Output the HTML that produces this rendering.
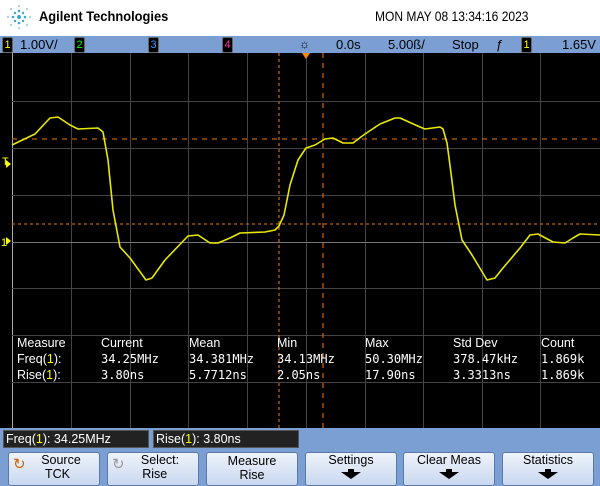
<!DOCTYPE html>
<html><head><style>
body{margin:0;width:600px;height:486px;overflow:hidden;background:#fff;font-family:"Liberation Sans",sans-serif;position:relative}
.a{position:absolute}
.bar{top:36px;left:0;width:600px;height:17px;background:#7b9fd3;font-size:13px;color:#000}
.bar span{position:absolute;top:1px}
.ch{position:absolute;top:1px;width:9px;height:14px;background:#000;border:1px solid #666;border-radius:2px;font-size:11px;text-align:center;line-height:14px}
.m{font-size:12.5px;color:#fff;line-height:16px}
.mono{font-family:"DejaVu Sans Mono","Liberation Mono",monospace;font-size:12px}
.y{color:#ff0}
.btn{position:absolute;top:452px;height:32px;width:90px;background:linear-gradient(#eef3fb,#c9d8ef);border:1px solid #5a78a8;border-radius:3px;font-size:12.5px;text-align:center;line-height:14px;color:#000}
.arr{display:block;margin:2px auto 0;width:6px;height:3px;background:#000;position:relative}
.arr:after{content:"";position:absolute;left:-7px;top:3px;border-left:10px solid transparent;border-right:10px solid transparent;border-top:7px solid #000}
</style></head><body>
<svg class="a" style="left:4px;top:2px" width="30" height="30" viewBox="0 0 30 30">
<g fill="#3aa6d6"><circle cx="15" cy="15" r="2"/><circle cx="15" cy="9" r="1.3"/><circle cx="15" cy="21" r="1.3"/><circle cx="9" cy="15" r="1.3"/><circle cx="21" cy="15" r="1.3"/><circle cx="11" cy="11" r="1.2"/><circle cx="19" cy="11" r="1.2"/><circle cx="11" cy="19" r="1.2"/><circle cx="19" cy="19" r="1.2"/><circle cx="15" cy="4" r=".8"/><circle cx="15" cy="26" r=".8"/><circle cx="4" cy="15" r=".8"/><circle cx="26" cy="15" r=".8"/><circle cx="7" cy="7" r=".8"/><circle cx="23" cy="7" r=".8"/><circle cx="7" cy="23" r=".8"/><circle cx="23" cy="23" r=".8"/></g></svg>
<div class="a" style="left:39px;top:8px;font-size:14px;font-weight:bold;transform:scaleX(.92);transform-origin:left">Agilent Technologies</div>
<div class="a" style="left:375px;top:8px;font-size:14px;transform:scaleX(.86);transform-origin:left">MON MAY 08 13:34:16 2023</div>
<div class="a bar">
<div class="ch" style="left:2px;color:#ff0">1</div><span style="left:20px">1.00V/</span>
<div class="ch" style="left:74px;color:#0f0">2</div>
<div class="ch" style="left:148px;color:#39f">3</div>
<div class="ch" style="left:222px;color:#f3a">4</div>
<span style="left:299px;font-size:12px">☼</span><span style="left:336px">0.0s</span><span style="left:388px">5.00ß/</span><span style="left:452px">Stop</span><span style="left:496px">ƒ</span>
<div class="ch" style="left:521px;color:#ff0">1</div><span style="left:562px">1.65V</span>
</div>
<svg class="a" style="left:0;top:53px" width="600" height="375">
<rect width="600" height="375" fill="#000"/>
<g stroke="#444" stroke-width="1">
<line x1="12.5" y1="0" x2="12.5" y2="375" stroke="#aaa"/>
<line x1="71.5" y1="0" x2="71.5" y2="375"/><line x1="130.5" y1="0" x2="130.5" y2="375"/><line x1="188.5" y1="0" x2="188.5" y2="375"/><line x1="247.5" y1="0" x2="247.5" y2="375"/><line x1="306.5" y1="0" x2="306.5" y2="375"/><line x1="365.5" y1="0" x2="365.5" y2="375"/><line x1="423.5" y1="0" x2="423.5" y2="375"/><line x1="482.5" y1="0" x2="482.5" y2="375"/><line x1="540.5" y1="0" x2="540.5" y2="375"/>
<line x1="12" y1="48.5" x2="600" y2="48.5"/><line x1="12" y1="95.5" x2="600" y2="95.5"/><line x1="12" y1="142.5" x2="600" y2="142.5"/><line x1="12" y1="189.5" x2="600" y2="189.5" stroke="#777"/><line x1="12" y1="235.5" x2="600" y2="235.5"/><line x1="12" y1="282.5" x2="600" y2="282.5"/><line x1="12" y1="329.5" x2="600" y2="329.5"/>
</g>
<g stroke="#c06010" stroke-width="1.3" stroke-dasharray="5,5">
<line x1="12" y1="86" x2="600" y2="86"/><line x1="323" y1="0" x2="323" y2="375"/>
</g>
<g stroke="#c06010" stroke-width="1.3" stroke-dasharray="3,3">
<line x1="12" y1="171" x2="600" y2="171"/><line x1="279" y1="0" x2="279" y2="375"/>
</g>
<polygon points="302,0 310,0 306,6" fill="#f80"/>
<polyline fill="none" stroke="#e8e800" stroke-width="1.6" stroke-linejoin="round" points="12,92 35,81 50,65 58,64 70,72 78,76 98,75 103,79 108,107 113,157 120,194 130,205 146,227 152,225 165,207 188,183 198,182 210,190 218,190 230,185 240,180 265,179 275,177 279,173 284,162 290,132 298,107 306,95 315,92 325,86 333,85 343,90 353,90 365,81 380,71 395,65 400,65 420,74 425,76 440,74 443,76 447,90 451,120 455,152 462,187 472,202 487,227 495,225 503,215 520,195 530,182 538,181 553,189 565,190 573,185 580,181 600,182"/>
<text x="2" y="112" fill="#ff0" font-size="11">T</text><polygon points="6,107 11,111 6,115" fill="#ff0"/>
<text x="1" y="193" fill="#ff0" font-size="11">1</text><polygon points="6,184 11,188 6,192" fill="#ff0"/>
</svg>
<div class="a m" style="left:17px;top:335px">Measure<br>Freq(<span class="y">1</span>):<br>Rise(<span class="y">1</span>):</div>
<div class="a m" style="left:101px;top:335px">Current<br><span class="mono">34.25MHz<br>3.80ns</span></div>
<div class="a m" style="left:189px;top:335px">Mean<br><span class="mono">34.381MHz<br>5.7712ns</span></div>
<div class="a m" style="left:277px;top:335px">Min<br><span class="mono">34.13MHz<br>2.05ns</span></div>
<div class="a m" style="left:365px;top:335px">Max<br><span class="mono">50.30MHz<br>17.90ns</span></div>
<div class="a m" style="left:453px;top:335px">Std Dev<br><span class="mono">378.47kHz<br>3.3313ns</span></div>
<div class="a m" style="left:541px;top:335px">Count<br><span class="mono">1.869k<br>1.869k</span></div>
<div class="a" style="left:0;top:428px;width:600px;height:58px;background:#7b9fd3"></div>
<div class="a" style="left:3px;top:430px;width:142px;height:16px;background:#222;border:1px solid #555;color:#fff;font-size:12.5px;line-height:16px;padding-left:2px">Freq(<span class="y">1</span>): 34.25MHz</div>
<div class="a" style="left:153px;top:430px;width:142px;height:16px;background:#222;border:1px solid #555;color:#fff;font-size:12.5px;line-height:16px;padding-left:2px">Rise(<span class="y">1</span>): 3.80ns</div>
<div class="btn" style="left:8px"><span style="position:absolute;left:4px;top:5px;color:#c60;font-size:15px">↻</span><span style="margin-left:14px">Source<br>&nbsp;&nbsp;TCK</span></div>
<div class="btn" style="left:107px"><span style="position:absolute;left:4px;top:5px;color:#999;font-size:15px">↻</span><span style="margin-left:14px">Select:<br>&nbsp;Rise</span></div>
<div class="btn" style="left:206px;top:452px"><span style="display:block;margin-top:1px">Measure<br>Rise</span></div>
<div class="btn" style="left:305px">Settings<span class="arr"></span></div>
<div class="btn" style="left:403px">Clear Meas<span class="arr"></span></div>
<div class="btn" style="left:502px">Statistics<span class="arr"></span></div>
</body></html>
